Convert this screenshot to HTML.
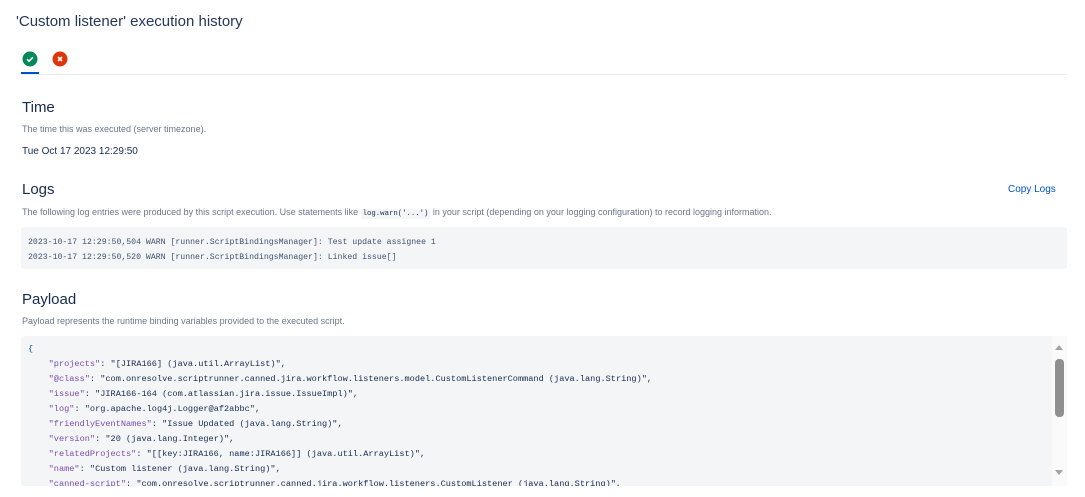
<!DOCTYPE html>
<html><head><meta charset="utf-8"><style>
*{margin:0;padding:0;box-sizing:border-box}
body{width:1085px;height:497px;overflow:hidden;background:#fff;font-family:"Liberation Sans",Arial,sans-serif;color:#172b4d;position:relative}
.a{position:absolute;white-space:nowrap}
.h{font-size:15px;color:#172b4d}
.d{font-size:9px;color:#6b778c}
.mono{font-family:"Liberation Mono",monospace;font-size:8.2px}
.box{position:absolute;background:#f4f5f7;border-radius:3px}
.k{color:#7a4dab}
.s{color:#172b4d}
.b{color:#0052cc}
code{font-family:"Liberation Mono",monospace;font-size:7.3px;background:#f4f5f7;padding:1px 2px;border-radius:2px;color:#172b4d}
</style></head><body>
<div class="a" style="left:16px;top:13px;font-size:15px;color:#253858">'Custom listener' execution history</div>

<svg class="a" style="left:22px;top:51px" width="16" height="16"><circle cx="8" cy="8" r="7.5" fill="#00875a"/><path d="M5 8.2l2 2 4-4" stroke="#fff" stroke-width="1.6" fill="none"/></svg>
<svg class="a" style="left:52px;top:51px" width="16" height="16"><circle cx="8" cy="8" r="7.5" fill="#de350b"/><path d="M6 6l4 4M10 6l-4 4" stroke="#fff" stroke-width="1.6"/></svg>
<div class="a" style="left:21px;top:72px;width:18px;height:2px;background:#0052cc"></div>
<div class="a" style="left:21px;top:74px;width:1046px;height:1px;background:#ebecf0"></div>

<div class="a h" style="left:22px;top:99px">Time</div>
<div class="a d" style="left:22px;top:124px">The time this was executed (server timezone).</div>
<div class="a" style="left:22px;top:146px;font-size:10px">Tue Oct 17 2023 12:29:50</div>

<div class="a h" style="left:22px;top:181px">Logs</div>
<div class="a" style="left:1008px;top:184px;font-size:10px;color:#0052cc">Copy Logs</div>
<div class="a d" style="left:22px;top:207px">The following log entries were produced by this script execution. Use statements like <code>log.warn('...')</code> in your script (depending on your logging configuration) to record logging information.</div>
<div class="box" style="left:21px;top:227px;width:1046px;height:42px"></div>
<div class="a mono" style="left:28px;top:235px;line-height:15px;color:#42526e">2023-10-17 12:29:50,504 WARN [runner.ScriptBindingsManager]: Test update assignee 1<br>2023-10-17 12:29:50,520 WARN [runner.ScriptBindingsManager]: Linked issue[]</div>

<div class="a h" style="left:22px;top:291px">Payload</div>
<div class="a d" style="left:22px;top:316px">Payload represents the runtime binding variables provided to the executed script.</div>
<div class="box" style="left:21px;top:336px;width:1031px;height:150px;border-radius:3px 0 0 3px;overflow:hidden">
<pre class="mono" style="position:absolute;left:7px;top:6px;line-height:15px;font-size:8.6px"><span class="b">{</span>
    <span class="k">"projects"</span>: <span class="s">"[JIRA166] (java.util.ArrayList)"</span>,
    <span class="k">"@class"</span>: <span class="s">"com.onresolve.scriptrunner.canned.jira.workflow.listeners.model.CustomListenerCommand (java.lang.String)"</span>,
    <span class="k">"issue"</span>: <span class="s">"JIRA166-164 (com.atlassian.jira.issue.IssueImpl)"</span>,
    <span class="k">"log"</span>: <span class="s">"org.apache.log4j.Logger@af2abbc"</span>,
    <span class="k">"friendlyEventNames"</span>: <span class="s">"Issue Updated (java.lang.String)"</span>,
    <span class="k">"version"</span>: <span class="s">"20 (java.lang.Integer)"</span>,
    <span class="k">"relatedProjects"</span>: <span class="s">"[[key:JIRA166, name:JIRA166]] (java.util.ArrayList)"</span>,
    <span class="k">"name"</span>: <span class="s">"Custom listener (java.lang.String)"</span>,
    <span class="k">"canned-script"</span>: <span class="s">"com.onresolve.scriptrunner.canned.jira.workflow.listeners.CustomListener (java.lang.String)"</span>,</pre>
</div>
<div class="a" style="left:1052px;top:336px;width:15px;height:150px;background:#fafafa"></div>
<div class="a" style="left:1055px;top:345px;width:0;height:0;border-left:4px solid transparent;border-right:4px solid transparent;border-bottom:5px solid #a3a3a3"></div>
<div class="a" style="left:1055px;top:359px;width:9px;height:58px;background:#8f8f8f;border-radius:4px"></div>
<div class="a" style="left:1055px;top:470px;width:0;height:0;border-left:4px solid transparent;border-right:4px solid transparent;border-top:5px solid #a3a3a3"></div>
</body></html>
